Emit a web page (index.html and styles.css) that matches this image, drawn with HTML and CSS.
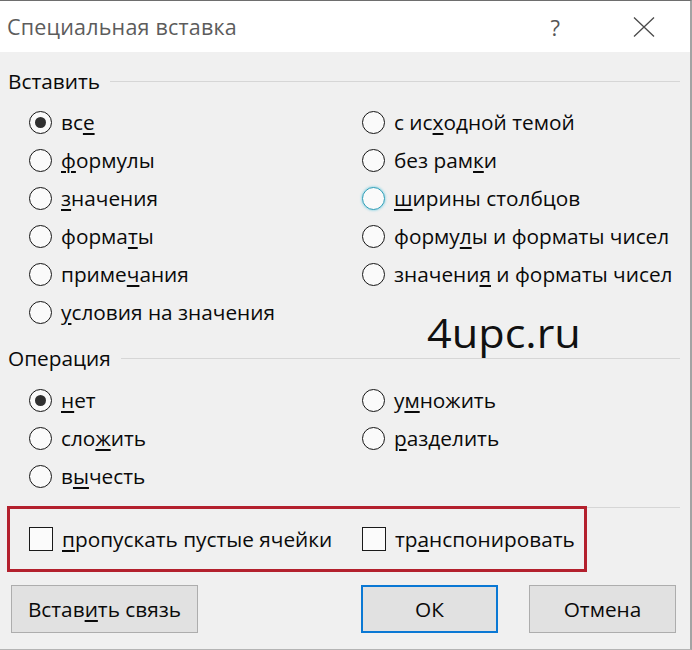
FILE: index.html
```html
<!DOCTYPE html>
<html lang="ru">
<head>
<meta charset="utf-8">
<title>Специальная вставка</title>
<link rel="stylesheet" href="styles.css">
</head>
<body>
<div class="window">
  <header class="titlebar">
    <span class="title">Специальная вставка</span>
    <span class="help">?</span>
    <span class="close"><svg width="22" height="20" viewBox="0 0 22 20"><path d="M1 0.5 L21 19.5 M21 0.5 L1 19.5" stroke="#4a4a4a" stroke-width="1.3" fill="none"/></svg></span>
  </header>
  <main class="content">
    <div class="group-label"><span>Вставить</span><i class="rule"></i></div>
    <div class="options paste">
      <div class="opt"><span class="radio checked"></span><span>вс<u>е</u></span></div>
      <div class="opt"><span class="radio"></span><span><u>ф</u>ормулы</span></div>
      <div class="opt"><span class="radio"></span><span><u>з</u>начения</span></div>
      <div class="opt"><span class="radio"></span><span>форма<u>т</u>ы</span></div>
      <div class="opt"><span class="radio"></span><span>приме<u>ч</u>ания</span></div>
      <div class="opt"><span class="radio"></span><span><u>у</u>словия на значения</span></div>
      <div class="opt"><span class="radio"></span><span>с ис<u>х</u>одной темой</span></div>
      <div class="opt"><span class="radio"></span><span>без рам<u>к</u>и</span></div>
      <div class="opt"><span class="radio focus"></span><span><u>ш</u>ирины столбцов</span></div>
      <div class="opt"><span class="radio"></span><span>форму<u>л</u>ы и форматы чисел</span></div>
      <div class="opt"><span class="radio"></span><span>значени<u>я</u> и форматы чисел</span></div>
    </div>
    <div class="group-label op-label"><span>Операция</span><i class="rule"></i></div>
    <div class="options ops">
      <div class="opt"><span class="radio checked"></span><span><u>н</u>ет</span></div>
      <div class="opt"><span class="radio"></span><span>сло<u>ж</u>ить</span></div>
      <div class="opt"><span class="radio"></span><span>в<u>ы</u>честь</span></div>
      <div class="opt"><span class="radio"></span><span>у<u>м</u>ножить</span></div>
      <div class="opt"><span class="radio"></span><span><u>р</u>азделить</span></div>
    </div>
    <div class="extras">
      <div class="highlight">
        <div class="check first"><span class="box"></span><span><u>п</u>ропускать пустые ячейки</span></div>
        <div class="check"><span class="box"></span><span>тр<u>а</u>нспонировать</span></div>
      </div>
    </div>
    <div class="buttons">
      <button class="btn link">Встав<u>и</u>ть связь</button>
      <button class="btn ok">ОК</button>
      <button class="btn cancel">Отмена</button>
    </div>
  </main>
  <div class="watermark">4upc.ru</div>
</div>
</body>
</html>
```
FILE: styles.css
```css
html, body {
  margin: 0;
  padding: 0;
  background: #f0f0f0;
}
.window {
  position: relative;
  width: 692px;
  height: 650px;
  box-sizing: border-box;
  border-top: 1px solid #6e6e6e;
  border-right: 2px solid #a3a3a3;
  border-bottom: 1px solid #b4b4b4;
  background: #f0f0f0;
  font-family: "Open Sans", "Noto Sans", sans-serif;
  color: #0a0a0a;
  display: flex;
  flex-direction: column;
  overflow: hidden;
}
.titlebar {
  height: 51px;
  flex: none;
  background: #fff;
  display: flex;
  align-items: center;
  padding-left: 7px;
}
.title {
  flex: 1;
  font-size: 21.5px;
  color: #5c5c5c;
  letter-spacing: 0.2px;
}
.help {
  font-size: 22px;
  color: #555;
  margin-right: 73px;
}
.close {
  display: flex;
  margin-right: 35px;
}
.content {
  padding: 14px 10px 0 8px;
}
.group-label {
  display: flex;
  align-items: center;
  height: 30px;
  font-size: 20.8px;
}
.rule {
  flex: 1;
  height: 1px;
  background: #d6d6d6;
  margin-left: 10px;
}
.options {
  display: grid;
  grid-template-columns: 333px 1fr;
  grid-auto-flow: column;
  padding-left: 21px;
  margin-top: 7px;
}
.paste {
  grid-template-rows: repeat(6, 38px);
}
.ops {
  grid-template-rows: repeat(3, 38px);
  margin-top: 8px;
}
.op-label {
  margin-top: 12px;
}
.opt, .check {
  display: flex;
  align-items: center;
  gap: 9px;
  font-size: 20.8px;
  white-space: nowrap;
}
u {
  text-decoration-thickness: 1.5px;
  text-underline-offset: 3px;
}
.radio {
  width: 23px;
  height: 23px;
  box-sizing: border-box;
  border: 1.9px solid #151515;
  border-radius: 50%;
  background: #fafafa;
  display: flex;
  align-items: center;
  justify-content: center;
  flex: none;
}
.radio.checked::after {
  content: "";
  width: 11px;
  height: 11px;
  border-radius: 50%;
  background: #303030;
}
.radio.focus {
  border-color: #2f9db6;
  box-shadow: 0 0 2px 1px rgba(90, 200, 225, 0.45);
}
.extras {
  margin-top: 12px;
  border-top: 1px solid #d6d6d6;
}
.highlight {
  width: 580px;
  height: 66px;
  box-sizing: border-box;
  margin: -2px 0 0 -1px;
  border: 3px solid #b3202d;
  display: flex;
  align-items: center;
  padding-left: 19px;
}
.check.first {
  width: 333px;
}
.box {
  width: 24px;
  height: 24px;
  box-sizing: border-box;
  border: 1.9px solid #1a1a1a;
  background: #fbfbfb;
  flex: none;
}
.buttons {
  display: flex;
  margin-top: 13px;
  padding-left: 3px;
  padding-right: 4px;
  height: 48px;
}
.btn {
  font-family: inherit;
  font-size: 20.8px;
  color: #0a0a0a;
  background: #e1e1e1;
  border: 1px solid #adadad;
  padding: 0;
  height: 48px;
  box-sizing: border-box;
}
.link {
  width: 187px;
}
.ok {
  width: 137px;
  margin-left: auto;
  border: 2px solid #0a78d4;
}
.cancel {
  width: 147px;
  margin-left: 31px;
}
.watermark {
  position: absolute;
  left: 427px;
  top: 304px;
  font-size: 40px;
  color: #111;
  transform: scaleX(1.08);
  transform-origin: left center;
}
```
